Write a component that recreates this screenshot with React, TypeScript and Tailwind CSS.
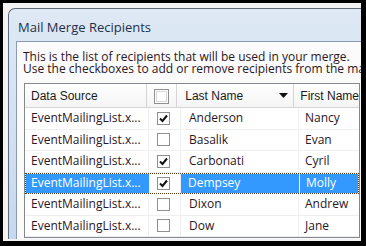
const rows = [
  { last: 'Anderson', first: 'Nancy', checked: true },
  { last: 'Basalik', first: 'Evan', checked: false },
  { last: 'Carbonati', first: 'Cyril', checked: true },
  { last: 'Dempsey', first: 'Molly', checked: true, selected: true },
  { last: 'Dixon', first: 'Andrew', checked: false },
  { last: 'Dow', first: 'Jane', checked: false },
];

function Check({ checked, big }: { checked: boolean; big?: boolean }) {
  return (
    <div
      className={
        big
          ? 'flex h-[15px] w-[15px] items-center justify-center border border-[#8e8f8f] bg-white p-[1px]'
          : 'flex h-[13px] w-[13px] items-center justify-center border border-[#8e8f8f] bg-white'
      }
    >
      {big && <div className="h-full w-full border border-[#d8d8d8]" />}
      {checked && (
        <svg width="9" height="9" viewBox="0 0 9 9">
          <path d="M1 4.5 L3.5 7 L8 1.5" fill="none" stroke="#111" strokeWidth="2" />
        </svg>
      )}
    </div>
  );
}

export default function App() {
  return (
    <div className="h-[246px] w-[366px] overflow-hidden bg-black pb-[5px] pl-[3px] pr-[5px] pt-[3px]">
      <div className="h-full w-full overflow-hidden bg-[#f2f2f2] pl-[5px] pt-[5px]">
        <div className="flex h-[231px] w-[355px] flex-col rounded-tl-[7px] border-l border-t border-[#5f6b7a] bg-gradient-to-b from-[#dfe9f5] to-[#c6d8ee]">
          <div className="flex h-[32px] items-center pl-[9px] pt-[5px] font-['Open_Sans',sans-serif] text-[13px] text-[#1e2f4a]">
            Mail Merge Recipients
          </div>
          <div className="ml-[7px] flex flex-1 flex-col overflow-hidden border-l border-t border-[#8a9bb3] bg-[#fbfbfb] pl-[6px]">
            <div className="whitespace-nowrap pt-[9px] font-['Open_Sans',sans-serif] text-[12px] leading-[12px] text-[#2a1624]">
              <div>This is the list of recipients that will be used in your merge.</div>
              <div>Use the checkboxes to add or remove recipients from the mail merge.</div>
            </div>
            <div className="ml-[1px] mt-[8px] flex w-[336px] flex-col border border-[#828790] bg-white">
              <div className="flex h-[24px] border-b border-[#d5d5d5] bg-gradient-to-b from-white to-[#f4f4f4] font-['Liberation_Sans',sans-serif] text-[12px] text-[#1a1a1a]">
                <div className="flex w-[124px] items-center border-r border-[#d5d5d5] pl-[6px]">Data Source</div>
                <div className="flex w-[31px] items-center justify-center border-r border-[#d5d5d5] pt-[1px]">
                  <Check checked={false} big />
                </div>
                <div className="flex w-[119px] items-center justify-between border-r border-[#d5d5d5] pl-[8px] pr-[5px]">
                  <span>Last Name</span>
                  <svg width="9" height="5" viewBox="0 0 9 5">
                    <path d="M0 0 H9 L4.5 5 Z" fill="#111" />
                  </svg>
                </div>
                <div className="flex flex-1 items-center whitespace-nowrap pl-[6px]">First Name</div>
              </div>
              {rows.map((r) => (
                <div
                  key={r.last}
                  className={
                    r.selected
                      ? "flex h-[21.5px] border border-dotted border-[#5a3a1a] font-['Open_Sans',sans-serif] text-[12px] text-white"
                      : "flex h-[21.5px] border-b border-[#efefef] font-['Open_Sans',sans-serif] text-[12px] text-[#2a1624]"
                  }
                >
                  <div
                    className={
                      r.selected
                        ? 'flex w-[123px] items-center whitespace-nowrap bg-[#3399ff] pl-[5px]'
                        : 'flex w-[124px] items-center whitespace-nowrap border-r border-[#efefef] pl-[6px]'
                    }
                  >
                    EventMailingList.x...
                  </div>
                  <div className="flex w-[32px] items-center justify-center border-r border-[#efefef] bg-white pr-[2px]">
                    <Check checked={r.checked} />
                  </div>
                  <div
                    className={
                      r.selected
                        ? 'flex w-[118px] items-center bg-[#3399ff] pl-[7px]'
                        : 'flex w-[118px] items-center border-r border-[#efefef] pl-[8px]'
                    }
                  >
                    {r.last}
                  </div>
                  <div
                    className={
                      r.selected
                        ? 'ml-[1px] flex flex-1 items-center bg-[#3399ff] pl-[6px]'
                        : 'flex flex-1 items-center pl-[6px]'
                    }
                  >
                    {r.first}
                  </div>
                </div>
              ))}
            </div>
          </div>
        </div>
      </div>
    </div>
  );
}
